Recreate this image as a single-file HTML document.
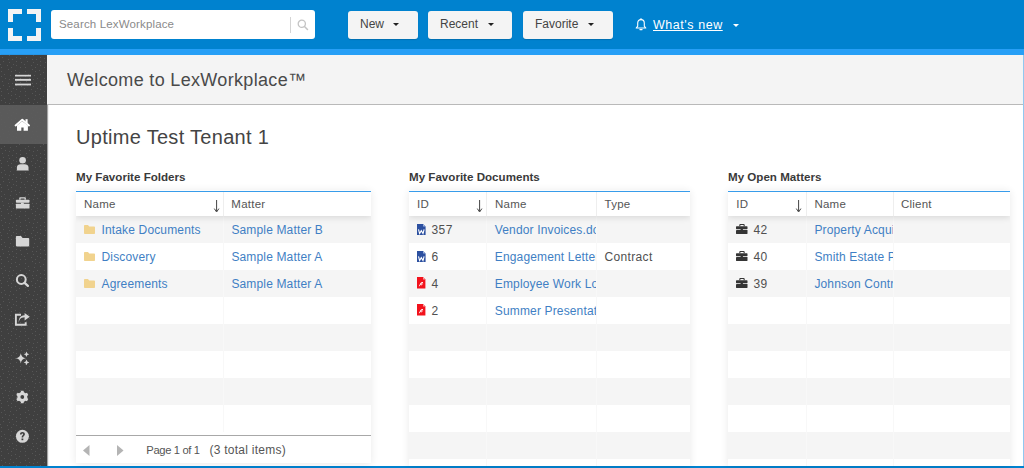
<!DOCTYPE html><html><head><meta charset="utf-8"><style>
*{margin:0;padding:0;box-sizing:border-box}
html,body{width:1024px;height:468px;overflow:hidden;background:#fff;font-family:"Liberation Sans",sans-serif}
.a{position:absolute}
.t{position:absolute;white-space:nowrap;line-height:1}
svg{position:absolute;overflow:visible}
#hdr{left:0;top:0;width:1024px;height:49px;background:#0082cf}
#stripe{left:0;top:49px;width:1024px;height:6px;background:#279ff6}
#side{left:0;top:55px;width:47px;height:411px;background:#3f3f3f;box-shadow:1px 0 1px rgba(0,0,0,.35)}
#act{left:0;top:105px;width:47px;height:39px;background:#5a5a5a}
#bot{left:0;top:466px;width:1024px;height:2px;background:#0082cf}
#rline{left:1023px;top:55px;width:1px;height:411px;background:#90c8f0}
.logo div{position:absolute;width:13.6px;height:13.2px;border:5.5px solid #f4f4f4}
#search{left:51px;top:10px;width:264px;height:29px;background:#fff;border-radius:3px}
.btn{top:11px;height:28px;background:#f4f4f4;border-radius:3px;box-shadow:0 1px 1px rgba(0,0,0,.15)}
.caret{position:absolute;width:0;height:0;border-left:3px solid transparent;border-right:3px solid transparent;border-top:3px solid #222}
#welcome{left:47px;top:55px;width:976px;height:50px;background:#f4f4f4;border-bottom:1px solid #b9b9b9}
.tbl{position:absolute;background:#fff;box-shadow:0 1px 8px rgba(0,0,0,.09);overflow:hidden}
.tb{position:absolute;left:0;top:0.5px;right:0;height:1.8px;background:#3aa0f0}
.hd{position:absolute;left:0;right:0;top:2px;height:24px;background:#fff;box-shadow:0 2px 6px rgba(0,0,0,.11);z-index:2}
.row{position:absolute;left:0;right:0;height:27px}
.g{background:#f5f5f5}
.cd{position:absolute;width:1px;background:#f8f8f8;z-index:1}
.hdiv{position:absolute;width:1px;background:#eee;z-index:3}
.cell{position:absolute;overflow:hidden;height:27px;z-index:3}
</style></head><body>
<div id="hdr" class="a"></div><div id="stripe" class="a"></div><div id="side" class="a"></div><div id="act" class="a"></div><div id="bot" class="a"></div><div id="rline" class="a"></div>
<svg style="left:0;top:55px" width="47" height="411"><defs><pattern id="dp" width="24" height="24" patternUnits="userSpaceOnUse"><g fill="#5c5c5c"><rect x="8" y="4" width="1" height="1"/><rect x="16" y="2" width="1" height="1"/><rect x="13" y="9" width="1" height="1"/><rect x="1" y="12" width="1" height="1"/><rect x="2" y="2" width="1" height="1"/><rect x="10" y="20" width="1" height="1"/><rect x="21" y="7" width="1" height="1"/><rect x="16" y="10" width="1" height="1"/><rect x="8" y="14" width="1" height="1"/><rect x="19" y="17" width="1" height="1"/><rect x="1" y="16" width="1" height="1"/><rect x="20" y="23" width="1" height="1"/><rect x="11" y="16" width="1" height="1"/><rect x="3" y="6" width="1" height="1"/><rect x="7" y="10" width="1" height="1"/><rect x="1" y="21" width="1" height="1"/><rect x="13" y="23" width="1" height="1"/><rect x="4" y="19" width="1" height="1"/><rect x="20" y="12" width="1" height="1"/><rect x="16" y="19" width="1" height="1"/><rect x="20" y="3" width="1" height="1"/><rect x="5" y="23" width="1" height="1"/><rect x="12" y="4" width="1" height="1"/><rect x="11" y="12" width="1" height="1"/><rect x="0" y="9" width="1" height="1"/><rect x="16" y="6" width="1" height="1"/><rect x="15" y="15" width="1" height="1"/><rect x="9" y="0" width="1" height="1"/><rect x="9" y="7" width="1" height="1"/></g></pattern></defs><rect width="47" height="411" fill="url(#dp)" opacity="0.8"/></svg>
<div class="a logo" style="left:8px;top:8.6px;width:33px;height:32.4px">
<div style="left:0;top:0;border-right:none;border-bottom:none"></div>
<div style="right:0;top:0;border-left:none;border-bottom:none"></div>
<div style="left:0;bottom:0;border-right:none;border-top:none"></div>
<div style="right:0;bottom:0;border-left:none;border-top:none"></div></div>
<div id="search" class="a"></div>
<span class="t" style="left:59.00px;top:19.00px;font-size:11.5px;color:#8a8a8a;letter-spacing:0.15px">Search LexWorkplace</span>
<div class="a" style="left:290px;top:17px;width:1px;height:16px;background:#d4d4d4"></div>
<svg style="left:297px;top:19px" width="12" height="12" viewBox="0 0 12 12"><circle cx="4.8" cy="4.8" r="3.6" fill="none" stroke="#c4c4c4" stroke-width="1.3"/><line x1="7.5" y1="7.5" x2="10.5" y2="10.5" stroke="#c4c4c4" stroke-width="1.5" stroke-linecap="round"/></svg>
<div class="a btn" style="left:348px;width:70px"></div>
<span class="t" style="left:360.00px;top:18.00px;font-size:12px;color:#444;">New</span>
<div class="caret" style="left:393.4px;top:23.3px"></div>
<div class="a btn" style="left:428px;width:84px"></div>
<span class="t" style="left:440.00px;top:18.00px;font-size:12px;color:#444;">Recent</span>
<div class="caret" style="left:487.6px;top:23.3px"></div>
<div class="a btn" style="left:523px;width:90px"></div>
<span class="t" style="left:535.00px;top:18.00px;font-size:12px;color:#444;">Favorite</span>
<div class="caret" style="left:588.4px;top:23.3px"></div>
<svg style="left:635px;top:18px" width="12" height="13" viewBox="0 0 12 13"><path d="M6 1.6 C3.7 1.6 2.7 3.3 2.7 5.2 L2.7 8.2 L1.2 10 L10.8 10 L9.3 8.2 L9.3 5.2 C9.3 3.3 8.3 1.6 6 1.6 Z" fill="none" stroke="#fff" stroke-width="1.1" stroke-linejoin="round"/><path d="M6 0.5 L6 1.6 M4.9 11.6 L7.1 11.6" stroke="#fff" stroke-width="1.1" stroke-linecap="round"/></svg>
<span class="t" style="left:653.00px;top:19.00px;font-size:12.5px;color:#fff;text-decoration:underline;letter-spacing:0.55px">What's new</span>
<div class="caret" style="left:733.4px;top:24.3px;border-top-color:#fff"></div>
<svg style="left:15px;top:74px" width="16" height="12"><rect x="0" y="0.8" width="16" height="1.7" fill="#d6d6d6"/><rect x="0" y="4.9" width="16" height="1.9" fill="#d6d6d6"/><rect x="0" y="9.6" width="16" height="1.8" fill="#d6d6d6"/></svg>
<svg style="left:14px;top:118px" width="16" height="13" viewBox="0 0 16 13"><path d="M1.6 7.4 L8.3 1.8 L15 7.4" fill="none" stroke="#fff" stroke-width="2" stroke-linecap="round" stroke-linejoin="round"/><rect x="11.5" y="1.2" width="2.1" height="4" fill="#fff"/><path d="M3 7.4 L8.2 3.2 L13.9 7.4 L13.9 12.7 L9.6 12.7 L9.6 9.4 L7.3 9.4 L7.3 12.7 L3 12.7 Z" fill="#fff"/></svg>
<svg style="left:16px;top:156px" width="13" height="15" viewBox="0 0 13 15"><circle cx="6.6" cy="4.2" r="3.3" fill="#d6d6d6"/><path d="M0.9 14.5 L0.9 11.6 C0.9 9.4 2.6 8.3 4.6 8.3 L8.6 8.3 C10.6 8.3 12.5 9.4 12.5 11.6 L12.5 14.5 Z" fill="#d6d6d6"/></svg>
<svg style="left:15px;top:196px" width="15" height="13" viewBox="0 0 15 13"><path d="M4.2 3.7 L4.2 2.2 C4.2 1.5 4.7 1.2 5.3 1.2 L9.8 1.2 C10.4 1.2 10.9 1.5 10.9 2.2 L10.9 3.7 L9.5 3.7 L9.5 2.5 L5.6 2.5 L5.6 3.7 Z" fill="#d6d6d6"/><rect x="0.9" y="3.7" width="13.6" height="3.1" rx="0.8" fill="#d6d6d6"/><rect x="0.9" y="7.8" width="13.6" height="4.7" rx="0.5" fill="#d6d6d6"/><rect x="6" y="6.6" width="2.8" height="2.1" fill="#d6d6d6"/></svg>
<svg style="left:15px;top:235px" width="15" height="12" viewBox="0 0 15 12"><path d="M0.9 1.6 C0.9 1.1 1.3 0.9 1.7 0.9 L6 0.9 L7.6 2.9 L13.4 2.9 C13.9 2.9 14.2 3.2 14.2 3.7 L14.2 10.6 C14.2 11.1 13.9 11.4 13.4 11.4 L1.7 11.4 C1.3 11.4 0.9 11.1 0.9 10.6 Z" fill="#d6d6d6"/></svg>
<svg style="left:15px;top:273px" width="15" height="15" viewBox="0 0 15 15"><circle cx="6.3" cy="6.5" r="4.4" fill="none" stroke="#d6d6d6" stroke-width="2"/><line x1="9.6" y1="9.8" x2="12.9" y2="12.9" stroke="#d6d6d6" stroke-width="2.3" stroke-linecap="round"/></svg>
<svg style="left:14px;top:312px" width="17" height="15" viewBox="0 0 17 15"><path d="M7 2.7 L1.9 2.7 L1.9 12.7 L11.7 12.7 L11.7 10.2" fill="none" stroke="#d6d6d6" stroke-width="1.9"/><path d="M4.9 11.4 C4.6 7.8 6.6 5.3 10.6 5.2 L10.6 8.4 L15.8 4.7 L10.6 0.9 L10.6 3.2 C6 3.6 4.2 7 4.9 11.4 Z" fill="#d6d6d6"/></svg>
<svg style="left:0;top:0" width="47" height="468"><path d="M20.80 353.20 Q21.41 357.69 25.90 358.30 Q21.41 358.91 20.80 363.40 Q20.19 358.91 15.70 358.30 Q20.19 357.69 20.80 353.20 Z" fill="#d6d6d6"/><path d="M26.50 351.40 Q26.84 353.86 29.30 354.20 Q26.84 354.54 26.50 357.00 Q26.16 354.54 23.70 354.20 Q26.16 353.86 26.50 351.40 Z" fill="#d6d6d6"/><path d="M26.50 359.60 Q26.84 362.06 29.30 362.40 Q26.84 362.74 26.50 365.20 Q26.16 362.74 23.70 362.40 Q26.16 362.06 26.50 359.60 Z" fill="#d6d6d6"/></svg>
<svg style="left:0;top:0" width="47" height="468"><path d="M20.67 392.27 L21.10 390.82 L23.50 390.82 L23.93 392.27 L25.58 393.23 L27.05 392.87 L28.26 394.95 L27.21 396.05 L27.21 397.95 L28.26 399.05 L27.05 401.13 L25.58 400.77 L23.93 401.73 L23.50 403.18 L21.10 403.18 L20.67 401.73 L19.02 400.77 L17.55 401.13 L16.34 399.05 L17.39 397.95 L17.39 396.05 L16.34 394.95 L17.55 392.87 L19.02 393.23 Z M24.20 397.0 A1.9 1.9 0 1 0 20.40 397.0 A1.9 1.9 0 1 0 24.20 397.0 Z" fill="#d6d6d6" fill-rule="evenodd"/></svg>
<svg style="left:0;top:0" width="47" height="468"><circle cx="22.4" cy="436.3" r="6.5" fill="#d6d6d6"/><path d="M20 434.4 C20 432.9 21 432.1 22.4 432.1 C23.9 432.1 24.9 432.9 24.9 434.2 C24.9 435.6 23.2 435.9 23.2 437.4 L21.6 437.4 C21.6 435.4 23.2 435.2 23.2 434.3 C23.2 433.8 22.9 433.5 22.4 433.5 C21.9 433.5 21.6 433.9 21.6 434.4 Z" fill="#3f3f3f"/><rect x="21.5" y="438.5" width="1.8" height="1.7" fill="#3f3f3f"/></svg>
<div id="welcome" class="a"></div>
<span class="t" style="left:67.00px;top:71.00px;font-size:18px;color:#4a4a4a;letter-spacing:0.33px">Welcome to LexWorkplace™</span>
<span class="t" style="left:76.00px;top:127.00px;font-size:20px;color:#444;letter-spacing:0.3px">Uptime Test Tenant 1</span>
<span class="t" style="left:76.00px;top:171.00px;font-size:11.6px;color:#3a3a3a;font-weight:bold">My Favorite Folders</span>
<span class="t" style="left:409.00px;top:171.00px;font-size:11.6px;color:#3a3a3a;font-weight:bold">My Favorite Documents</span>
<span class="t" style="left:728.00px;top:171.00px;font-size:11.6px;color:#3a3a3a;font-weight:bold">My Open Matters</span>
<div class="tbl" style="left:76px;top:190px;width:295px;height:273px">
<div class="tb"></div>
<div class="row g" style="top:26px"></div>
<div class="row" style="top:53px"></div>
<div class="row g" style="top:80px"></div>
<div class="row" style="top:107px"></div>
<div class="row g" style="top:134px"></div>
<div class="row" style="top:161px"></div>
<div class="row g" style="top:188px"></div>
<div class="row" style="top:215px"></div>
<div class="row g" style="top:242px"></div>
<div class="row" style="top:269px"></div>
<div class="cd" style="left:147px;top:26px;height:273px"></div>
<div class="hd"></div>
<div class="hdiv" style="left:147px;top:2px;height:24px"></div>
</div>
<span class="t" style="left:84.00px;top:199.00px;font-size:11.5px;color:#555;z-index:5;letter-spacing:0.25px">Name</span>
<span class="t" style="left:231.30px;top:199.00px;font-size:11.5px;color:#555;z-index:5;letter-spacing:0.25px">Matter</span>
<svg style="left:213.9px;top:200px;z-index:4" width="6" height="13" viewBox="0 0 6 13"><line x1="2.6" y1="0" x2="2.6" y2="11" stroke="#444" stroke-width="1"/><path d="M0.3 8.6 L2.6 12 L4.9 8.6" fill="none" stroke="#444" stroke-width="1"/></svg>
<div class="cell" style="left:76px;top:216px;width:147px"><span class="t" style="left:25.50px;top:8.00px;font-size:12px;color:#3f7fc4;letter-spacing:0.15px">Intake Documents</span></div>
<div class="cell" style="left:223px;top:216px;width:148px"><span class="t" style="left:8.40px;top:8.00px;font-size:12px;color:#3f7fc4;letter-spacing:0.15px">Sample Matter B</span></div>
<div class="cell" style="left:76px;top:243px;width:147px"><span class="t" style="left:25.50px;top:8.00px;font-size:12px;color:#3f7fc4;letter-spacing:0.15px">Discovery</span></div>
<div class="cell" style="left:223px;top:243px;width:148px"><span class="t" style="left:8.40px;top:8.00px;font-size:12px;color:#3f7fc4;letter-spacing:0.15px">Sample Matter A</span></div>
<div class="cell" style="left:76px;top:270px;width:147px"><span class="t" style="left:25.50px;top:8.00px;font-size:12px;color:#3f7fc4;letter-spacing:0.15px">Agreements</span></div>
<div class="cell" style="left:223px;top:270px;width:148px"><span class="t" style="left:8.40px;top:8.00px;font-size:12px;color:#3f7fc4;letter-spacing:0.15px">Sample Matter A</span></div>
<div class="a" style="left:76px;top:432px;width:295px;height:31px;background:#fff;z-index:6"></div><div class="a" style="left:76px;top:434.6px;width:295px;height:1px;background:#a8a8a8;z-index:6"></div>
<svg style="left:83px;top:444.6px;z-index:7" width="7" height="11"><path d="M6.5 0 L0 5.5 L6.5 11 Z" fill="#b4b4b4"/></svg>
<svg style="left:117px;top:444.6px;z-index:7" width="7" height="11"><path d="M0 0 L6.5 5.5 L0 11 Z" fill="#b4b4b4"/></svg>
<span class="t" style="left:146.30px;top:445.00px;font-size:11.2px;color:#555;z-index:7;letter-spacing:-0.35px">Page 1 of 1</span>
<span class="t" style="left:209.50px;top:444.00px;font-size:12px;color:#555;z-index:7;letter-spacing:0.25px">(3 total items)</span>
<svg style="left:84px;top:225px;z-index:4" width="11" height="9" viewBox="0 0 11 9"><path d="M0 0.8 C0 0.3 0.3 0 0.8 0 L4 0 L5.2 1.4 L10.2 1.4 C10.7 1.4 11 1.7 11 2.2 L11 8.2 C11 8.7 10.7 9 10.2 9 L0.8 9 C0.3 9 0 8.7 0 8.2 Z" fill="#f1d38e"/></svg>
<svg style="left:84px;top:252px;z-index:4" width="11" height="9" viewBox="0 0 11 9"><path d="M0 0.8 C0 0.3 0.3 0 0.8 0 L4 0 L5.2 1.4 L10.2 1.4 C10.7 1.4 11 1.7 11 2.2 L11 8.2 C11 8.7 10.7 9 10.2 9 L0.8 9 C0.3 9 0 8.7 0 8.2 Z" fill="#f1d38e"/></svg>
<svg style="left:84px;top:279px;z-index:4" width="11" height="9" viewBox="0 0 11 9"><path d="M0 0.8 C0 0.3 0.3 0 0.8 0 L4 0 L5.2 1.4 L10.2 1.4 C10.7 1.4 11 1.7 11 2.2 L11 8.2 C11 8.7 10.7 9 10.2 9 L0.8 9 C0.3 9 0 8.7 0 8.2 Z" fill="#f1d38e"/></svg>
<div class="tbl" style="left:409px;top:190px;width:281px;height:276px">
<div class="tb"></div>
<div class="row g" style="top:26px"></div>
<div class="row" style="top:53px"></div>
<div class="row g" style="top:80px"></div>
<div class="row" style="top:107px"></div>
<div class="row g" style="top:134px"></div>
<div class="row" style="top:161px"></div>
<div class="row g" style="top:188px"></div>
<div class="row" style="top:215px"></div>
<div class="row g" style="top:242px"></div>
<div class="row" style="top:269px"></div>
<div class="cd" style="left:77px;top:26px;height:276px"></div>
<div class="cd" style="left:187px;top:26px;height:276px"></div>
<div class="hd"></div>
<div class="hdiv" style="left:77px;top:2px;height:24px"></div>
<div class="hdiv" style="left:187px;top:2px;height:24px"></div>
</div>
<span class="t" style="left:417.00px;top:199.00px;font-size:11.5px;color:#555;z-index:5;letter-spacing:0.25px">ID</span>
<span class="t" style="left:495.00px;top:199.00px;font-size:11.5px;color:#555;z-index:5;letter-spacing:0.25px">Name</span>
<span class="t" style="left:604.50px;top:199.00px;font-size:11.5px;color:#555;z-index:5;letter-spacing:0.25px">Type</span>
<svg style="left:476.9px;top:200px;z-index:4" width="6" height="13" viewBox="0 0 6 13"><line x1="2.6" y1="0" x2="2.6" y2="11" stroke="#444" stroke-width="1"/><path d="M0.3 8.6 L2.6 12 L4.9 8.6" fill="none" stroke="#444" stroke-width="1"/></svg>
<span class="t" style="left:431.60px;top:224.00px;font-size:12px;color:#505050;z-index:5;letter-spacing:0.35px">357</span>
<div class="cell" style="left:486px;top:216px;width:110px"><span class="t" style="left:8.80px;top:8.00px;font-size:12px;color:#3f7fc4;letter-spacing:0.15px">Vendor Invoices.docx</span></div>
<span class="t" style="left:431.60px;top:251.00px;font-size:12px;color:#505050;z-index:5;letter-spacing:0.35px">6</span>
<div class="cell" style="left:486px;top:243px;width:110px"><span class="t" style="left:8.80px;top:8.00px;font-size:12px;color:#3f7fc4;letter-spacing:0.15px">Engagement Letter.docx</span></div>
<span class="t" style="left:604.50px;top:251.00px;font-size:12px;color:#505050;z-index:5;letter-spacing:0.35px">Contract</span>
<span class="t" style="left:431.60px;top:278.00px;font-size:12px;color:#505050;z-index:5;letter-spacing:0.35px">4</span>
<div class="cell" style="left:486px;top:270px;width:110px"><span class="t" style="left:8.80px;top:8.00px;font-size:12px;color:#3f7fc4;letter-spacing:0.15px">Employee Work Log.pdf</span></div>
<span class="t" style="left:431.60px;top:305.00px;font-size:12px;color:#505050;z-index:5;letter-spacing:0.35px">2</span>
<div class="cell" style="left:486px;top:297px;width:110px"><span class="t" style="left:8.80px;top:8.00px;font-size:12px;color:#3f7fc4;letter-spacing:0.15px">Summer Presentation.pdf</span></div>
<svg style="left:416.8px;top:223.7px;z-index:4" width="9" height="11" viewBox="0 0 9 11"><path d="M0 0 L6 0 L8.6 2.6 L8.6 11 L0 11 Z" fill="#2c50a0"/><path d="M6 0 L6 2.6 L8.6 2.6 Z" fill="#9fb4dd"/><path d="M1.5 5.3 L2.6 9.5 L4.3 6.6 L6 9.5 L7.1 5.3" fill="none" stroke="#fff" stroke-width="1.1"/></svg>
<svg style="left:416.8px;top:250.7px;z-index:4" width="9" height="11" viewBox="0 0 9 11"><path d="M0 0 L6 0 L8.6 2.6 L8.6 11 L0 11 Z" fill="#2c50a0"/><path d="M6 0 L6 2.6 L8.6 2.6 Z" fill="#9fb4dd"/><path d="M1.5 5.3 L2.6 9.5 L4.3 6.6 L6 9.5 L7.1 5.3" fill="none" stroke="#fff" stroke-width="1.1"/></svg>
<svg style="left:416.8px;top:277px;z-index:4" width="9" height="12" viewBox="0 0 9 12"><path d="M0 0 L6 0 L8.4 2.6 L8.4 11.6 L0 11.6 Z" fill="#f2121c"/><path d="M6 0 L6 2.6 L8.4 2.6 Z" fill="#f8a0a0"/><path d="M2.4 9.2 C2.8 7.2 4.5 6 6 5.6 C4.5 5.3 3.3 6 3.4 7 C3.5 8 5 8.3 5.6 6.8" fill="none" stroke="#fff" stroke-width="0.9"/></svg>
<svg style="left:416.8px;top:304px;z-index:4" width="9" height="12" viewBox="0 0 9 12"><path d="M0 0 L6 0 L8.4 2.6 L8.4 11.6 L0 11.6 Z" fill="#f2121c"/><path d="M6 0 L6 2.6 L8.4 2.6 Z" fill="#f8a0a0"/><path d="M2.4 9.2 C2.8 7.2 4.5 6 6 5.6 C4.5 5.3 3.3 6 3.4 7 C3.5 8 5 8.3 5.6 6.8" fill="none" stroke="#fff" stroke-width="0.9"/></svg>
<div class="tbl" style="left:728px;top:190px;width:282px;height:276px">
<div class="tb"></div>
<div class="row g" style="top:26px"></div>
<div class="row" style="top:53px"></div>
<div class="row g" style="top:80px"></div>
<div class="row" style="top:107px"></div>
<div class="row g" style="top:134px"></div>
<div class="row" style="top:161px"></div>
<div class="row g" style="top:188px"></div>
<div class="row" style="top:215px"></div>
<div class="row g" style="top:242px"></div>
<div class="row" style="top:269px"></div>
<div class="cd" style="left:78px;top:26px;height:276px"></div>
<div class="cd" style="left:165px;top:26px;height:276px"></div>
<div class="hd"></div>
<div class="hdiv" style="left:78px;top:2px;height:24px"></div>
<div class="hdiv" style="left:165px;top:2px;height:24px"></div>
</div>
<span class="t" style="left:736.30px;top:199.00px;font-size:11.5px;color:#555;z-index:5;letter-spacing:0.25px">ID</span>
<span class="t" style="left:814.40px;top:199.00px;font-size:11.5px;color:#555;z-index:5;letter-spacing:0.25px">Name</span>
<span class="t" style="left:900.90px;top:199.00px;font-size:11.5px;color:#555;z-index:5;letter-spacing:0.25px">Client</span>
<svg style="left:796.4px;top:200px;z-index:4" width="6" height="13" viewBox="0 0 6 13"><line x1="2.6" y1="0" x2="2.6" y2="11" stroke="#444" stroke-width="1"/><path d="M0.3 8.6 L2.6 12 L4.9 8.6" fill="none" stroke="#444" stroke-width="1"/></svg>
<span class="t" style="left:753.50px;top:224.00px;font-size:12px;color:#505050;z-index:5;letter-spacing:0.35px">42</span>
<div class="cell" style="left:806px;top:216px;width:87px"><span class="t" style="left:8.40px;top:8.00px;font-size:12px;color:#3f7fc4;letter-spacing:0.15px">Property Acquisition</span></div>
<span class="t" style="left:753.50px;top:251.00px;font-size:12px;color:#505050;z-index:5;letter-spacing:0.35px">40</span>
<div class="cell" style="left:806px;top:243px;width:87px"><span class="t" style="left:8.40px;top:8.00px;font-size:12px;color:#3f7fc4;letter-spacing:0.15px">Smith Estate Planning</span></div>
<span class="t" style="left:753.50px;top:278.00px;font-size:12px;color:#505050;z-index:5;letter-spacing:0.35px">39</span>
<div class="cell" style="left:806px;top:270px;width:87px"><span class="t" style="left:8.40px;top:8.00px;font-size:12px;color:#3f7fc4;letter-spacing:0.15px">Johnson Contract Review</span></div>
<svg style="left:736.3px;top:224px;z-index:4" width="12" height="10" viewBox="0 0 12 10"><path d="M3.3 2.3 L3.3 1 C3.3 0.4 3.7 0.1 4.2 0.1 L7.8 0.1 C8.3 0.1 8.7 0.4 8.7 1 L8.7 2.3 L7.6 2.3 L7.6 1.1 L4.4 1.1 L4.4 2.3 Z" fill="#353535"/><rect x="0" y="2.3" width="11.5" height="2.9" rx="0.6" fill="#353535"/><rect x="0" y="6" width="11.5" height="3.9" rx="0.4" fill="#353535"/><rect x="4.6" y="5.0" width="2.3" height="1.6" fill="#353535"/></svg>
<svg style="left:736.3px;top:251px;z-index:4" width="12" height="10" viewBox="0 0 12 10"><path d="M3.3 2.3 L3.3 1 C3.3 0.4 3.7 0.1 4.2 0.1 L7.8 0.1 C8.3 0.1 8.7 0.4 8.7 1 L8.7 2.3 L7.6 2.3 L7.6 1.1 L4.4 1.1 L4.4 2.3 Z" fill="#353535"/><rect x="0" y="2.3" width="11.5" height="2.9" rx="0.6" fill="#353535"/><rect x="0" y="6" width="11.5" height="3.9" rx="0.4" fill="#353535"/><rect x="4.6" y="5.0" width="2.3" height="1.6" fill="#353535"/></svg>
<svg style="left:736.3px;top:278px;z-index:4" width="12" height="10" viewBox="0 0 12 10"><path d="M3.3 2.3 L3.3 1 C3.3 0.4 3.7 0.1 4.2 0.1 L7.8 0.1 C8.3 0.1 8.7 0.4 8.7 1 L8.7 2.3 L7.6 2.3 L7.6 1.1 L4.4 1.1 L4.4 2.3 Z" fill="#353535"/><rect x="0" y="2.3" width="11.5" height="2.9" rx="0.6" fill="#353535"/><rect x="0" y="6" width="11.5" height="3.9" rx="0.4" fill="#353535"/><rect x="4.6" y="5.0" width="2.3" height="1.6" fill="#353535"/></svg>
</body></html>
